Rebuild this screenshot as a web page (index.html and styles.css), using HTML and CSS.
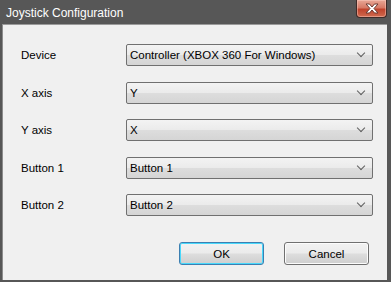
FILE: index.html
```html
<!DOCTYPE html>
<html lang="en">
<head>
    <meta charset="UTF-8">
    <meta name="viewport" content="width=device-width, initial-scale=1.0">
    <title>Joystick Configuration</title>
    <link rel="stylesheet" href="styles.css">
</head>
<body>

    <div class="window">
        <!-- title bar -->
        <div class="titlebar">
            <span class="title">Joystick Configuration</span>
            <div class="close-btn">
                <svg width="14" height="11" viewBox="0 0 14 11">
                    <path d="M1 1 H4.5 L7 4 L9.5 1 H13 L9 5.5 L13 10 H9.5 L7 7 L4.5 10 H1 L5 5.5 Z"
                          fill="#ffffff" stroke="#6b3a32" stroke-width="1" stroke-linejoin="round"/>
                </svg>
            </div>
        </div>

        <!-- client area -->
        <div class="client">
            <div class="form-grid">
                <label for="device">Device</label>
                <div class="combo" id="device">
                    <span>Controller (XBOX 360 For Windows)</span>
                    <span class="arrow"></span>
                </div>

                <label for="x-axis">X axis</label>
                <div class="combo" id="x-axis">
                    <span>Y</span>
                    <span class="arrow"></span>
                </div>

                <label for="y-axis">Y axis</label>
                <div class="combo" id="y-axis">
                    <span>X</span>
                    <span class="arrow"></span>
                </div>

                <label for="button-1">Button 1</label>
                <div class="combo" id="button-1">
                    <span>Button 1</span>
                    <span class="arrow"></span>
                </div>

                <label for="button-2">Button 2</label>
                <div class="combo" id="button-2">
                    <span>Button 2</span>
                    <span class="arrow"></span>
                </div>
            </div>

            <div class="actions">
                <button type="button" class="btn btn-default">OK</button>
                <button type="button" class="btn">Cancel</button>
            </div>
        </div>
    </div>

</body>
</html>
```

FILE: styles.css
```css
body {
    margin: 0;
    padding: 0;
    font-family: 'Liberation Sans', Arial, sans-serif;
    font-size: 11.5px;
    background-color: #575757;
}

.window {
    width: 391px;
    height: 282px;
    box-sizing: border-box;
    background-color: #575757;
    padding: 0 4px 2px 2px;
    display: flex;
    flex-direction: column;
}

.titlebar {
    height: 24px;
    display: flex;
    align-items: flex-start;
    justify-content: space-between;
    flex-shrink: 0;
}

.title {
    color: #ffffff;
    margin-left: 4px;
    margin-top: 6px;
    font-size: 12px;
}

.close-btn {
    width: 31px;
    height: 18px;
    box-sizing: border-box;
    border: 1px solid #3f2b28;
    border-top: none;
    border-radius: 0 0 4px 4px;
    background: linear-gradient(to bottom, #e8a796 0%, #d77a66 45%, #c0432c 55%, #cf6a4f 100%);
    box-shadow: inset 0 0 0 1px rgba(255, 210, 200, 0.45);
    display: flex;
    align-items: center;
    justify-content: center;
}

.close-btn svg {
    display: block;
}

.client {
    flex: 1;
    background-color: #f0f0f0;
    border-top: 1px solid #9a9a9a;
    border-left: 1px solid #8c8c8c;
    padding: 19px 14px 0 18px;
}

.form-grid {
    display: grid;
    grid-template-columns: 105px 247px;
    grid-auto-rows: 22px;
    row-gap: 15.5px;
    align-items: center;
}

.form-grid label {
    color: #000000;
}

.combo {
    height: 22px;
    box-sizing: border-box;
    border: 1px solid #707070;
    border-radius: 2px;
    background: linear-gradient(to bottom, #f3f3f3 0%, #ebebeb 48%, #dddddd 52%, #d5d5d5 100%);
    display: flex;
    align-items: center;
    justify-content: space-between;
    padding: 0 6px 0 3px;
    color: #000000;
}

.arrow {
    width: 5px;
    height: 5px;
    border-right: 1.5px solid #5f5f5f;
    border-bottom: 1.5px solid #5f5f5f;
    transform: rotate(45deg);
    margin-top: -4px;
    margin-right: 2px;
}

.actions {
    display: flex;
    justify-content: flex-end;
    gap: 20px;
    margin-top: 26px;
    padding-right: 4px;
}

.btn {
    width: 85px;
    height: 23px;
    font-family: 'Liberation Sans', Arial, sans-serif;
    font-size: 11.5px;
    color: #000000;
    border: 1px solid #707070;
    border-radius: 3px;
    background: linear-gradient(to bottom, #f2f2f2 0%, #ebebeb 48%, #dddddd 52%, #cfcfcf 100%);
    box-shadow: inset 0 0 0 1px #fcfcfc;
    padding: 0;
}

.btn-default {
    border-color: #3c7fb1;
    box-shadow: inset 0 0 0 1px #48d8fb;
}
```
